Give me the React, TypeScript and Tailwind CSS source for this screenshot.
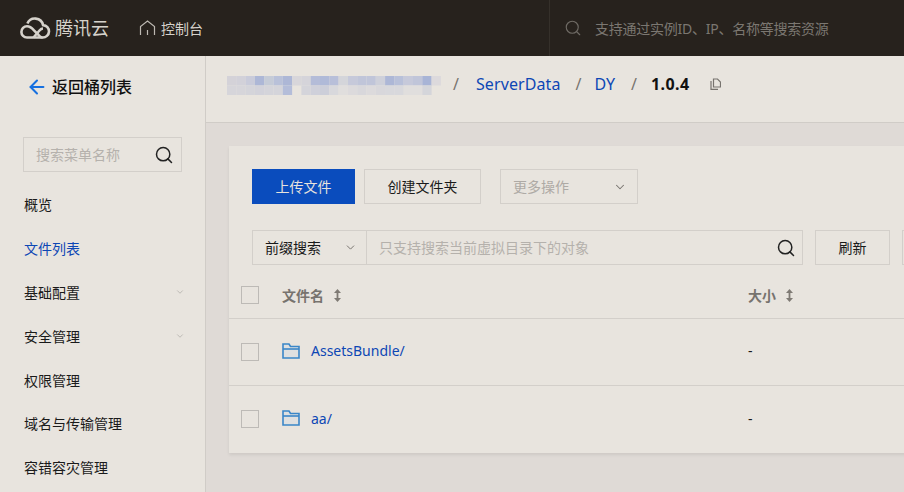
import { ChevronDown, Search, ArrowLeft } from "lucide-react";

const font = { fontFamily: '"Noto Sans", "Noto Sans CJK SC", sans-serif' };

const mosaic: [number, number, string][] = [
  [0, 0, "#d4d2d8"], [1, 0, "#d2d1d9"], [2, 0, "#c9cbda"], [3, 0, "#adb7d6"], [4, 0, "#c5cbd7"], [5, 0, "#b9c1d9"], [6, 0, "#adb7d6"],
  [7, 0, "#d8d6da"], [8, 0, "#d5d4da"], [9, 0, "#b4bcd8"], [10, 0, "#b0bad8"], [11, 0, "#b8bfd9"], [12, 0, "#d4d5da"], [13, 0, "#c6c9da"], [14, 0, "#c0c5d9"], [15, 0, "#c0c5d9"], [16, 0, "#ced0da"], [17, 0, "#adb7d6"], [18, 0, "#b8c0d9"], [19, 0, "#c6c9da"], [20, 0, "#c0c5d9"], [21, 0, "#a8b4d6"], [22, 0, "#dcd9dc"],
  [0, 1, "#d6d5da"], [1, 1, "#d6d5da"], [2, 1, "#d4d4da"], [3, 1, "#d2d2da"], [4, 1, "#d4d4da"], [5, 1, "#d4d4da"], [6, 1, "#b4bdd9"],
  [8, 1, "#d4d4da"], [9, 1, "#cfd0da"], [10, 1, "#ccced9"], [11, 1, "#d8d8dc"], [12, 1, "#e0dedd"], [13, 1, "#dcdadc"], [14, 1, "#d8d7db"], [15, 1, "#dcdadc"], [16, 1, "#d8d7db"], [17, 1, "#d8d8dc"], [18, 1, "#d8d8dc"], [19, 1, "#e0dedd"], [20, 1, "#e0dedd"], [21, 1, "#d4d5da"],
];

function Cloud() {
  return (
    <svg width="32" height="24" viewBox="0 0 32 24" fill="none" stroke="#d6d2cb" strokeWidth="2.6">
      <path d="M8 21.500h15.500a6.200 6.200 0 0 0 .6-12.400A8.300 8.300 0 0 0 8.400 7.500" />
      <path d="M8 21.500a5.600 5.600 0 0 1 0-11.200c3.200 0 5.200 2 7 4l4 4c.8.9 1.800 3.200 4.500 3.200" />
      <path d="M14.500 21.500l6-7c1-1.200 2-2 3.500-2" />
    </svg>
  );
}

function Home() {
  return (
    <svg width="17" height="16" viewBox="0 0 17 16" fill="none" stroke="#bdb9b2" strokeWidth="1.2">
      <path d="M1.500 15V6.500L8.500 1l7 5.500V15" />
      <path d="M8.500 10v5" />
    </svg>
  );
}

function Sort() {
  return (
    <svg width="7" height="13" viewBox="0 0 7 13" fill="#7f7a74">
      <path d="M3.500 0L7 4H4.400v5H7l-3.500 4L0 9h2.600V4H0z" />
    </svg>
  );
}

function Folder() {
  return (
    <svg width="18" height="16" viewBox="0 0 18 16" fill="none">
      <path d="M1 5.500V1h6l1.500 2.500H17V15H1z" fill="#dfe0e0" stroke="#3a86c8" strokeWidth="1.600" />
      <path d="M1 6h16" stroke="#3a86c8" strokeWidth="1.600" />
    </svg>
  );
}

function Copy() {
  return (
    <svg width="11" height="12" viewBox="0 0 11 12" fill="none" stroke="#77736e" strokeWidth="1.200">
      <path d="M3.500 9V1h4l3 3v5z" />
      <path d="M1 3v8.300h7" />
    </svg>
  );
}

function Check() {
  return <span className="block h-[18px] w-[18px] border border-[#bdbab6]" />;
}

function NavItem({ label, active, arrow }: { label: string; active?: boolean; arrow?: boolean }) {
  return (
    <div className={`flex h-[43.8px] items-center justify-between pl-6 pr-5 text-[14px] ${active ? "text-[#0d47b5]" : "text-[#1a1a1a]"}`}>
      <span>{label}</span>
      {arrow && <ChevronDown size={10} strokeWidth={2} className="text-[#b5b2ad]" />}
    </div>
  );
}

function FileRow({ name, h }: { name: string; h: string }) {
  return (
    <div className={`flex items-center border-t border-[#d3cfca] pb-[1px] ${h}`}>
      <div className="w-[53px] pl-3">
        <Check />
      </div>
      <div className="flex w-[466px] items-center gap-[11px]">
        <span className="mb-[2px]"><Folder /></span>
        <span className="mb-[2px] text-[14px] text-[#0d47b5]">{name}</span>
      </div>
      <span className="mb-[2px] text-[14px] text-[#1a1a1a]">-</span>
    </div>
  );
}

export default function App() {
  return (
    <div className="flex h-[492px] w-[904px] flex-col overflow-hidden bg-[#dfdad6]" style={font}>
      <header className="flex h-[56px] shrink-0 items-center bg-[#27221d]">
        <div className="flex w-[549px] items-center pl-[19px]">
          <Cloud />
          <span className="ml-[4px] text-[18px] text-[#d6d2cb]">腾讯云</span>
          <span className="ml-[30px]"><Home /></span>
          <span className="ml-[5px] text-[14px] text-[#d6d2cb]">控制台</span>
        </div>
        <div className="flex h-full flex-1 items-center border-l border-[#35302a] pl-[14px]">
          <Search size={18} strokeWidth={1.500} className="text-[#6f6b65]" />
          <span className="ml-[13px] text-[14px] tracking-[-0.25px] text-[#7b7771]">支持通过实例ID、IP、名称等搜索资源</span>
        </div>
      </header>
      <div className="flex min-h-0 flex-1">
        <aside className="w-[206px] shrink-0 border-r border-[#d0ccc7] bg-[#e8e4de]">
          <div className="flex h-[62px] items-center pl-[26px]">
            <ArrowLeft size={22} strokeWidth={2.200} className="text-[#1670e0]" />
            <span className="ml-[4px] text-[16px] font-medium text-[#111]">返回桶列表</span>
          </div>
          <div className="ml-[23px] mt-[19px] flex h-[35px] w-[159px] items-center justify-between border border-[#d3cfca] pl-3 pr-[7px]">
            <span className="text-[14px] text-[#b5b1ac]">搜索菜单名称</span>
            <Search size={20} strokeWidth={1.800} className="text-[#222]" />
          </div>
          <div className="mt-[11px]">
            <NavItem label="概览" />
            <NavItem label="文件列表" active />
            <NavItem label="基础配置" arrow />
            <NavItem label="安全管理" arrow />
            <NavItem label="权限管理" />
            <NavItem label="域名与传输管理" />
            <NavItem label="容错容灾管理" />
          </div>
        </aside>
        <main className="min-w-0 flex-1">
          <div className="flex h-[67px] items-center border-b border-[#d0ccc7] bg-[#e8e4de] pb-[10px] pl-[21px] text-[16px]">
            <svg width="214" height="20" className="mt-[4px] shrink-0">
              {mosaic.map(([x, y, c]) => (
                <rect key={`${x}-${y}`} x={x * 9.300} y={y * 9.500} width="9.300" height="9.500" fill={c} />
              ))}
            </svg>
            <span className="ml-[12px] text-[#77736e]">/</span>
            <span className="ml-[17px] tracking-[0.1px] text-[#0d47b5]">ServerData</span>
            <span className="ml-[15px] text-[#77736e]">/</span>
            <span className="ml-[13px] text-[#0d47b5]">DY</span>
            <span className="ml-[16px] text-[#77736e]">/</span>
            <span className="ml-[14px] font-bold tracking-[0.4px] text-[#111]">1.0.4</span>
            <span className="ml-[21px]"><Copy /></span>
          </div>
          <div className="pl-[23px] pt-[23px]">
            <section className="h-[307px] w-[720px] bg-[#e8e4de] shadow-[0_2px_3px_rgba(0,0,0,0.08)]">
              <div className="flex pl-[23px] pt-[23px]">
                <button className="h-[35px] w-[103px] bg-[#0a4cbd] text-[14px] text-[#e7e3dd]">上传文件</button>
                <button className="ml-[9px] h-[35px] w-[117px] border border-[#d3cfca] text-[14px] text-[#1a1a1a]">创建文件夹</button>
                <div className="ml-[19px] flex h-[35px] w-[138px] items-center justify-between border border-[#d3cfca] pl-3 pr-[10px] text-[14px] text-[#aeaaa5]">
                  <span>更多操作</span>
                  <ChevronDown size={14} strokeWidth={1.800} className="text-[#77736e]" />
                </div>
              </div>
              <div className="mt-[26px] flex pl-[23px]">
                <div className="flex h-[35px] w-[551px] border border-[#d3cfca]">
                  <div className="flex w-[114px] items-center justify-between border-r border-[#d3cfca] pl-3 pr-[9px] text-[14px] text-[#1a1a1a]">
                    <span>前缀搜索</span>
                    <ChevronDown size={13} strokeWidth={1.800} className="text-[#77736e]" />
                  </div>
                  <div className="flex flex-1 items-center justify-between pl-3 pr-[6px]">
                    <span className="text-[14px] text-[#b5b1ac]">只支持搜索当前虚拟目录下的对象</span>
                    <Search size={20} strokeWidth={1.800} className="text-[#222]" />
                  </div>
                </div>
                <button className="ml-3 h-[35px] w-[75px] border border-[#d3cfca] text-[14px] text-[#1a1a1a]">刷新</button>
                <span className="ml-3 block h-[35px] w-[30px] border border-[#d3cfca]" />
              </div>
              <div className="flex h-[53px] items-center pt-[7px]">
                <div className="w-[53px] pl-3">
                  <Check />
                </div>
                <div className="flex w-[466px] items-center gap-[10px] text-[14px] font-bold text-[#77736e]">
                  <span>文件名</span>
                  <Sort />
                </div>
                <div className="flex items-center gap-[10px] text-[14px] font-bold text-[#77736e]">
                  <span>大小</span>
                  <Sort />
                </div>
              </div>
              <FileRow name="AssetsBundle/" h="h-[67px]" />
              <FileRow name="aa/" h="h-[68px]" />
            </section>
          </div>
        </main>
      </div>
    </div>
  );
}
